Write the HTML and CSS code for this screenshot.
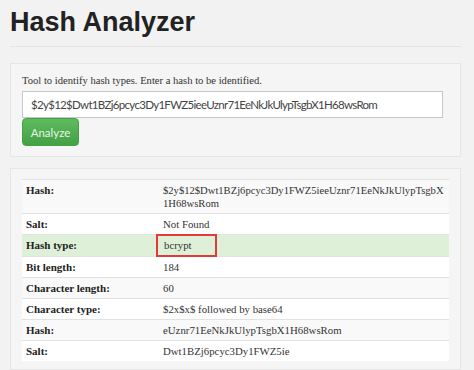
FILE: index.html
```html
<!DOCTYPE html>
<html lang="en">
<head>
  <meta charset="UTF-8">
  <title>Hash Analyzer</title>
  <link rel="stylesheet" href="styles.css">
</head>
<body>
  <div class="container">
    <h1>Hash Analyzer</h1>
    <hr>

    <div class="well">
      <p class="intro">Tool to identify hash types. Enter a hash to be identified.</p>
      <form id="analyzer">
        <input type="text" class="hash-input" value="$2y$12$Dwt1BZj6pcyc3Dy1FWZ5ieeUznr71EeNkJkUlypTsgbX1H68wsRom">
        <button type="button" class="btn-analyze">Analyze</button>
      </form>
    </div>

    <div class="well results">
      <table class="result-table">
        <tr>
          <th>Hash:</th>
          <td class="wrap">$2y$12$Dwt1BZj6pcyc3Dy1FWZ5ieeUznr71EeNkJkUlypTsgbX1H68wsRom</td>
        </tr>
        <tr>
          <th>Salt:</th>
          <td>Not Found</td>
        </tr>
        <tr class="success">
          <th>Hash type:</th>
          <td><span class="mark">bcrypt</span></td>
        </tr>
        <tr>
          <th>Bit length:</th>
          <td>184</td>
        </tr>
        <tr>
          <th>Character length:</th>
          <td>60</td>
        </tr>
        <tr>
          <th>Character type:</th>
          <td>$2x$x$ followed by base64</td>
        </tr>
        <tr>
          <th>Hash:</th>
          <td>eUznr71EeNkJkUlypTsgbX1H68wsRom</td>
        </tr>
        <tr>
          <th>Salt:</th>
          <td>Dwt1BZj6pcyc3Dy1FWZ5ie</td>
        </tr>
      </table>
    </div>
  </div>
</body>
</html>
```

FILE: styles.css
```css
body {
  margin: 0;
  background: #f2f2f2;
  font-family: "Liberation Serif", serif;
  font-size: 11px;
  color: #333;
}

.container {
  padding: 0 13px 0 10px;
}

h1 {
  font-family: "Liberation Sans", Arial, sans-serif;
  font-size: 27px;
  font-weight: bold;
  color: #222;
  margin: 0;
  padding-top: 6px;
  line-height: 32px;
}

hr {
  border: none;
  border-top: 1px solid #e4e4e4;
  margin: 8px 0 16px;
}

.well {
  background: #f5f5f5;
  border: 1px solid #e6e6e6;
  padding: 10px 11px;
  margin-bottom: 11px;
}

.intro {
  margin: 0 0 3px;
  font-size: 10.6px;
  line-height: 14px;
}

.hash-input {
  display: block;
  box-sizing: border-box;
  width: 421px;
  height: 27px;
  margin: 0;
  padding: 0 8px;
  border: 1px solid #c8c8c8;
  background: #fff;
  font-family: Lato, "Open Sans", sans-serif;
  font-size: 11.5px;
  letter-spacing: -0.7px;
  color: #444;
}

.btn-analyze {
  display: block;
  width: 57px;
  height: 28px;
  margin: 0;
  padding: 0;
  border: 1px solid #45a045;
  border-radius: 4px;
  background: linear-gradient(#5fbb5f, #44a044);
  color: #e6f5e6;
  font-family: Lato, "Open Sans", sans-serif;
  font-size: 11.5px;
}

.results {
  padding-bottom: 8px;
}

.result-table {
  width: 100%;
  border-collapse: collapse;
}

.result-table th,
.result-table td {
  text-align: left;
  vertical-align: top;
  padding: 4px 4px 3px;
  line-height: 13px;
  border-top: 1px solid #e2e2e2;
}

.result-table th {
  width: 129px;
  color: #222;
}

.result-table td {
  color: #333;
  font-size: 10.8px;
}

.result-table td.wrap {
  font-size: 10.6px;
  word-break: break-all;
}

.result-table tr:nth-child(odd) {
  background: #f9f9f9;
}

.result-table tr:nth-child(even) {
  background: #fff;
}

.result-table tr.success {
  background: #dff0d8;
}

.mark {
  display: inline-block;
  box-sizing: border-box;
  width: 61px;
  margin: -6px 0 -4px -7px;
  padding: 3px 0 3px 6px;
  border: 2px solid #e03a3a;
}
```
